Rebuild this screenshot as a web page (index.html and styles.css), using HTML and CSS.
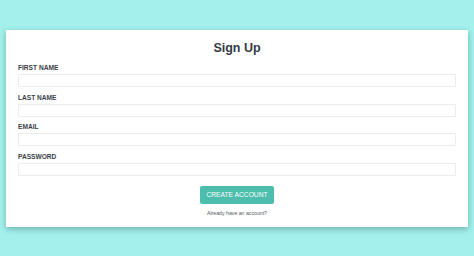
FILE: index.html
```html
<!DOCTYPE html>
<html>
<head>
<meta charset="utf-8">
<link rel="stylesheet" href="styles.css">
</head>
<body>
<div class="card">
  <h1 class="title">Sign Up</h1>
  <form class="form">
    <label class="label">FIRST NAME</label>
    <div class="input"></div>
    <label class="label">LAST NAME</label>
    <div class="input"></div>
    <label class="label">EMAIL</label>
    <div class="input"></div>
    <label class="label">PASSWORD</label>
    <div class="input"></div>
    <div class="actions">
      <div class="button">CREATE ACCOUNT</div>
      <div class="note">Already have an account?</div>
    </div>
  </form>
</div>
</body>
</html>
```
FILE: styles.css
```css
html, body { margin: 0; padding: 0; }
body {
  background: #a3f0ec;
  width: 474px;
  height: 256px;
  overflow: hidden;
  font-family: "Liberation Sans", Arial, sans-serif;
  color: #343a45;
}
.card {
  margin: 30px 6px 0 6px;
  width: 462px;
  height: 197px;
  background: #fff;
  box-shadow: 0 2px 6px rgba(0, 60, 60, 0.35);
  box-sizing: border-box;
  padding: 10px 12px 0 12px;
}
.title {
  margin: 0;
  text-align: center;
  font-size: 12.5px;
  font-weight: bold;
  line-height: 16px;
  color: #343a45;
}
.form {
  display: flex;
  flex-direction: column;
  margin-top: 7px;
}
.label {
  font-size: 6.6px;
  font-weight: bold;
  line-height: 9px;
  color: #3a3f47;
  margin-bottom: 2px;
}
.input {
  height: 13px;
  border: 1px solid #ececec;
  border-radius: 1px;
  margin-bottom: 5.5px;
  width: 438px;
  box-sizing: border-box;
}
.actions {
  display: flex;
  flex-direction: column;
  align-items: center;
  margin-top: 4.5px;
}
.button {
  background: #4dbdae;
  color: #fff;
  font-size: 6.7px;
  line-height: 18.5px;
  height: 18.5px;
  padding: 0 6px;
  border-radius: 2px;
}
.note {
  margin-top: 6px;
  font-size: 5.2px;
  line-height: 7px;
  color: #555a60;
}
```
